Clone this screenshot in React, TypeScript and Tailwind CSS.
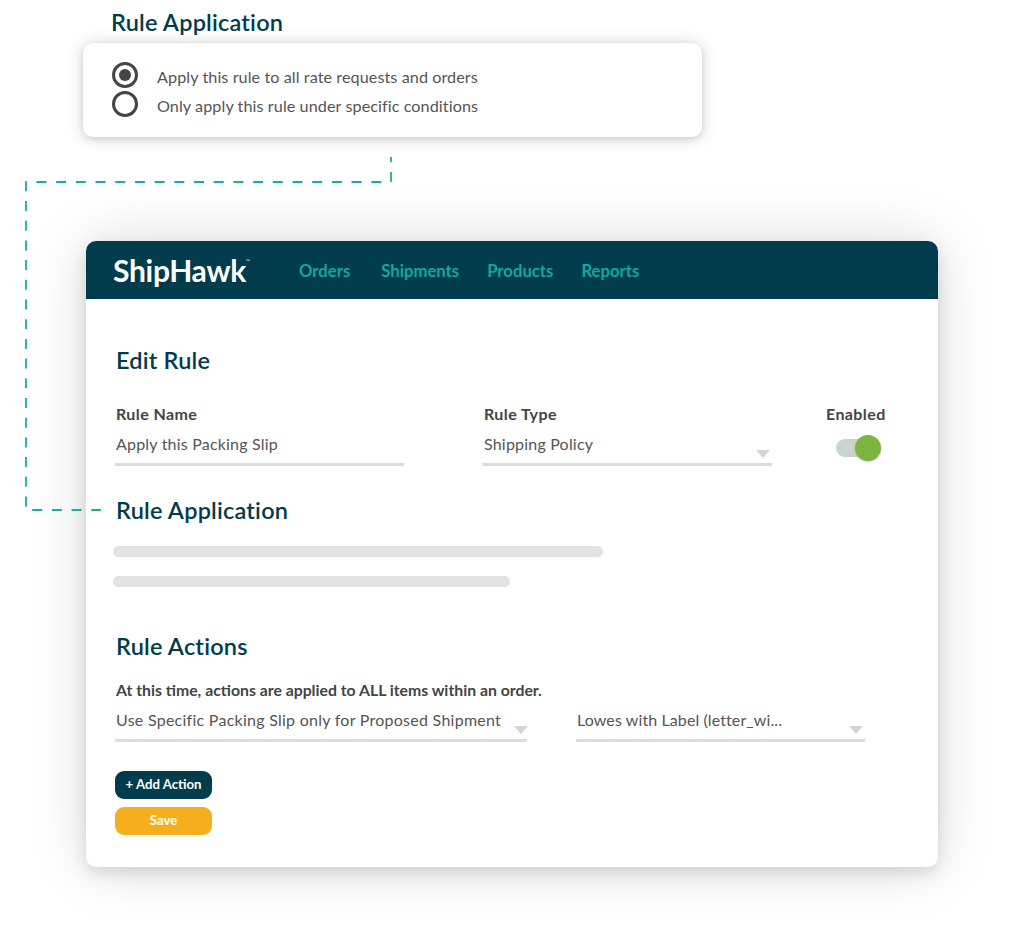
const HEADING_CLS = "text-[23.5px] font-semibold leading-[28px] tracking-[0.2px] text-[#003c4b]";
const LABEL_CLS = "text-[16px] font-bold leading-[20px] tracking-[0.4px] text-[#444444]";
const VALUE_CLS = "text-[16px] leading-[20px] text-[#555555] whitespace-nowrap";

function Radio({ checked }: { checked?: boolean }) {
  return (
    <span className="flex h-[26px] w-[26px] items-center justify-center rounded-full border-[3px] border-[#454545] bg-white">
      {checked && <span className="h-[12px] w-[12px] rounded-full bg-[#454545]" />}
    </span>
  );
}

function Field({
  value,
  arrow,
  className,
  textCls = "tracking-[0.2px]",
  arrowCls = "mr-[2px]",
}: {
  value: string;
  arrow?: boolean;
  className: string;
  textCls?: string;
  arrowCls?: string;
}) {
  return (
    <div className={`flex h-[32px] items-start justify-between border-b-[3px] border-[#dcdcdc] pl-[1px] ${className}`}>
      <span className={`${VALUE_CLS} ${textCls}`}>{value}</span>
      {arrow && <span className={`${arrowCls} mt-[16px] h-0 w-0 border-x-[7px] border-t-[8px] border-x-transparent border-t-[#d4d4d4]`} />}
    </div>
  );
}

export default function App() {
  return (
    <div className="relative h-[952px] w-[1024px] overflow-hidden bg-white font-['Lato',sans-serif]">
      <div className="pl-[83px] pt-[8px]">
        <h2 className={`${HEADING_CLS} pl-[28px]`}>Rule Application</h2>
        <div className="mt-[7px] flex h-[94px] w-[619px] items-start gap-[19px] rounded-[10px] bg-white pl-[29px] pt-[19px] shadow-[0_1px_16px_rgba(0,0,0,0.2),0_2px_5px_rgba(0,0,0,0.08)]">
          <div className="flex flex-col gap-[3px]">
            <Radio checked />
            <Radio />
          </div>
          <div className="flex flex-col gap-[9px] pt-[5px] text-[16.2px] leading-[20px] tracking-[0.07px] text-[#555555]">
            <span>Apply this rule to all rate requests and orders</span>
            <span>Only apply this rule under specific conditions</span>
          </div>
        </div>

        <div className="ml-[3px] mt-[104px] h-[626px] w-[852px] overflow-hidden rounded-[10px] bg-white shadow-[0_0_60px_rgba(0,0,0,0.14),0_6px_16px_rgba(0,0,0,0.12)]">
          <header className="flex h-[58px] items-center bg-[#003c4b] pl-[27px]">
            <span className="flex w-[186px] items-start text-[30px] font-bold leading-none tracking-[-0.3px] text-white">
              ShipHawk
              <span className="mt-[4px] text-[5px] font-normal tracking-normal">™</span>
            </span>
            <nav className="flex gap-[31px] pt-[4px] text-[16.7px] font-bold text-[#12a79d]">
              <span>Orders</span>
              <span>Shipments</span>
              <span className="-ml-[3px]">Products</span>
              <span className="-ml-[3px]">Reports</span>
            </nav>
          </header>

          <div className="pl-[29px] pt-[47px]">
            <h1 className={`${HEADING_CLS} pl-[1px]`}>Edit Rule</h1>
            <div className="mt-[30px] flex">
              <div className="w-[367px]">
                <div className={`${LABEL_CLS} pl-[1px]`}>Rule Name</div>
                <Field value="Apply this Packing Slip" className="mt-[10px] w-[289px]" />
              </div>
              <div className="w-[344px]">
                <div className={`${LABEL_CLS} pl-[2px]`}>Rule Type</div>
                <Field value="Shipping Policy" arrow className="mt-[10px] w-[290px] pl-[2px]" />
              </div>
              <div>
                <div className={LABEL_CLS}>Enabled</div>
                <div className="ml-[10px] mt-[11px] flex h-[26px] w-[46px] items-center">
                  <span className="h-[18px] w-[34px] shrink-0 rounded-full bg-[#cbd3cd]" />
                  <span className="-ml-[15px] h-[26px] w-[26px] shrink-0 rounded-full bg-[#7cb53f] shadow-[0_1px_2px_rgba(0,0,0,0.2)]" />
                </div>
              </div>
            </div>

            <h2 className={`${HEADING_CLS} mt-[30px] pl-[1px]`}>Rule Application</h2>
            <div className="mt-[22px] flex flex-col gap-[19px]">
              <div className="-ml-[2px] h-[11px] w-[490px] rounded-full bg-[#e3e3e3]" />
              <div className="-ml-[2px] h-[11px] w-[397px] rounded-full bg-[#e3e3e3]" />
            </div>

            <h2 className={`${HEADING_CLS} mt-[45px] pl-[1px]`}>Rule Actions</h2>
            <p className="mt-[20px] pl-[1px] text-[15.8px] font-bold leading-[20px] text-[#444444]">
              At this time, actions are applied to ALL items within an order.
            </p>
            <div className="mt-[10px] flex gap-[49px]">
              <Field
                value="Use Specific Packing Slip only for Proposed Shipment"
                arrow
                className="w-[412px]"
                textCls="tracking-[0.26px]"
                arrowCls="-mr-[1px]"
              />
              <Field value="Lowes with Label (letter_wi..." arrow className="w-[289px]" textCls="tracking-[0.1px]" />
            </div>

            <div className="mt-[29px] flex w-[97px] flex-col gap-[8px] text-[13.2px] font-bold leading-none text-white">
              <button className="flex h-[28px] items-center justify-center rounded-[9px] bg-[#003c4b]">+ Add Action</button>
              <button className="flex h-[28px] items-center justify-center rounded-[9px] bg-[#f5ae1e]">Save</button>
            </div>
          </div>
        </div>
      </div>

      {/* connector */}
      <svg className="absolute left-0 top-0" width="1024" height="952" fill="none">
        <path
          d="M391 157V182H26V510H101"
          stroke="#14b0a8"
          strokeWidth="1.8"
          strokeDasharray="10 9.7"
          strokeDashoffset="4.7"
        />
      </svg>
    </div>
  );
}
